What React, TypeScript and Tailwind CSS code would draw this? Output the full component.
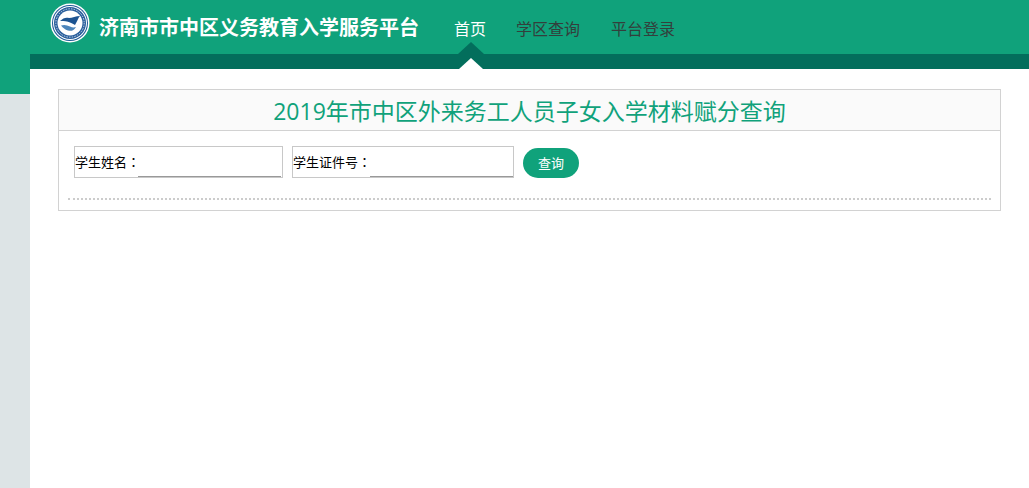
const cjk = { fontFamily: '"Noto Sans CJK SC", sans-serif' };
const tc = { fontFamily: '"Noto Sans CJK TC", sans-serif' };
const digits = { fontFamily: '"Open Sans", sans-serif' };

function Logo() {
  return (
    <svg width="40" height="40" viewBox="0 0 40 40" className="shrink-0">
      <circle cx="20" cy="20" r="19.5" fill="#ffffff" />
      <circle cx="20" cy="20" r="18" fill="#1f5a96" />
      <circle cx="20" cy="20" r="17" fill="#ffffff" />
      <circle cx="20" cy="20" r="16" fill="#2a5f9c" />
      <circle cx="20" cy="20" r="12.500" fill="#ffffff" />
      <circle cx="20" cy="20" r="14.200" fill="none" stroke="#cfdcea" strokeWidth="1" strokeDasharray="1.5 1.2" />
      <path d="M10 18c3-3 6-4 9-3 3 0 7-2 11-2-2 2-3 6-5 9-3-2-6-3-8-3.500-2-.5-5-.5-7-.5z" fill="#1d5491" />
      <path d="M11 22.500c3-1 6-.5 9 1 2 1 4 1.200 6 .5-2 3.500-5 4.500-8 3.500-3-1-5-2.500-7-5z" fill="#4d86bb" />
      <path d="M11 20.500c3-1 7-.5 10 1.500" stroke="#ffffff" strokeWidth="1" fill="none" />
    </svg>
  );
}

function Field({
  label,
  width,
  labelWidth,
}: {
  label: string;
  width: string;
  labelWidth: string;
}) {
  return (
    <div className={`flex items-center h-[32px] border border-[#c8c8c8] ${width}`}>
      <span className={`text-[13px] leading-none text-black whitespace-nowrap -mt-[2px] ${labelWidth}`}>
        {label}
        <span style={tc}>：</span>
      </span>
      <input
        className="h-[30px] w-[143px] border-b border-b-[#999999] outline-none bg-transparent"
        type="text"
      />
    </div>
  );
}

export default function App() {
  return (
    <div className="flex h-screen overflow-hidden bg-white" style={cjk}>
      <aside className="flex flex-col w-[30px] shrink-0">
        <div className="h-[94px] bg-[#10a27b]" />
        <div className="flex-1 bg-[#dde4e6]" />
      </aside>
      <main className="flex-1 min-w-0 flex flex-col">
        <header className="relative h-[54px] bg-[#10a27b] flex items-start pl-[20px]">
          <div className="mt-[3px]">
            <Logo />
          </div>
          <h1 className="ml-[9px] mt-[12px] text-[20px] leading-[30px] font-bold text-white whitespace-nowrap">
            济南市市中区义务教育入学服务平台
          </h1>
          <nav className="flex ml-[35px] mt-[13px] text-[16px] leading-[30px] text-[#333f3c]">
            <a className="text-white">首页</a>
            <a className="ml-[30px]">学区查询</a>
            <a className="ml-[31px]">平台登录</a>
          </nav>
          <div className="absolute left-[428px] top-[42px] w-0 h-0 border-x-[13px] border-x-transparent border-b-[12px] border-b-[#036e5c]" />
        </header>
        <div className="relative h-[15px] bg-[#036e5c]">
          <div className="absolute left-[429px] top-[4px] w-0 h-0 border-x-[12px] border-x-transparent border-b-[11px] border-b-white" />
        </div>
        <section className="mt-[20px] mx-[28px] border border-[#d2d2d2]">
          <h2 className="h-[41px] bg-[#fafafa] border-b border-[#d2d2d2] text-center text-[23px] leading-[40px] text-[#10a27b] font-normal whitespace-nowrap">
            <span style={digits}>2019</span>年市中区外来务工人员子女入学材料赋分查询
          </h2>
          <div className="px-[9px] pb-[10px]">
            <div className="flex items-end pl-[6px] pt-[15px] pb-[20px] border-b-2 border-dotted border-[#cccccc]">
              <Field label="学生姓名" width="w-[209px]" labelWidth="w-[63px]" />
              <div className="ml-[9px]">
                <Field label="学生证件号" width="w-[222px]" labelWidth="w-[77px]" />
              </div>
              <button className="ml-[9px] w-[56px] h-[30px] rounded-full bg-[#10a27b] text-white text-[13px]">
                查询
              </button>
            </div>
          </div>
        </section>
      </main>
    </div>
  );
}
